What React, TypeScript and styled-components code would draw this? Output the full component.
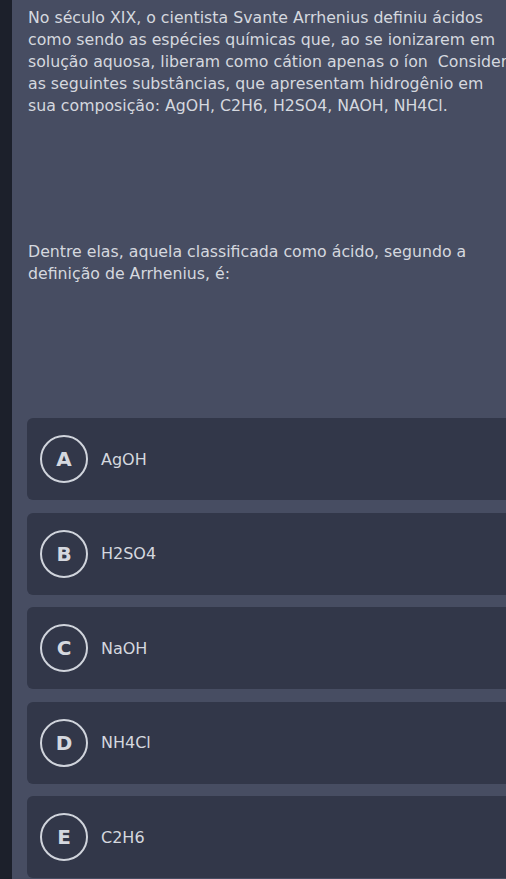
import styled, { createGlobalStyle } from 'styled-components';

const GlobalStyle = createGlobalStyle`
    html, body {
        margin: 0;
        padding: 0;
        background: #474d62;
        overflow: hidden;
    }
    #root {
        width: 506px;
        height: 879px;
        overflow: hidden;
    }
`;

const Page = styled.div`
    display: flex;
    width: 540px;
    height: 879px;
    font-family: "DejaVu Sans", "Open Sans", sans-serif;
    color: #d5d8df;
`;

const SideStrip = styled.div`
    width: 12px;
    flex-shrink: 0;
    background: #1c202b;
`;

const Main = styled.main`
    flex: 1;
    background: #474d62;
    padding: 7px 0 0 15px;
    display: flex;
    flex-direction: column;
`;

const Statement = styled.p<{ $gapAfter: number }>`
    margin: 0 0 ${p => p.$gapAfter}px 1px;
    font-size: 15.75px;
    line-height: 22px;
    white-space: nowrap;
`;

const Options = styled.div`
    display: flex;
    flex-direction: column;
    gap: 12.5px;
`;

const OptionCard = styled.div`
    height: 82px;
    background: #323749;
    border-radius: 6px 0 0 6px;
    display: flex;
    align-items: center;
    padding-left: 13px;
    gap: 13px;
`;

const Letter = styled.span`
    width: 44px;
    height: 44px;
    border: 2px solid #d0d4dc;
    border-radius: 50%;
    display: flex;
    align-items: center;
    justify-content: center;
    font-size: 20px;
    font-weight: 700;
    color: #d5d8df;
`;

const Answer = styled.span`
    font-size: 16px;
`;

const options = [
    { key: 'A', text: 'AgOH' },
    { key: 'B', text: 'H2SO4' },
    { key: 'C', text: 'NaOH' },
    { key: 'D', text: 'NH4Cl' },
    { key: 'E', text: 'C2H6' },
];

export default function App() {
    return (
        <>
            <GlobalStyle />
            <Page>
                <SideStrip />
                <Main>
                    <Statement $gapAfter={124}>
                        No século XIX, o cientista Svante Arrhenius definiu ácidos<br />
                        como sendo as espécies químicas que, ao se ionizarem em<br />
                        solução aquosa, liberam como cátion apenas o íon&nbsp; Considere<br />
                        as seguintes substâncias, que apresentam hidrogênio em<br />
                        sua composição: AgOH, C2H6, H2SO4, NAOH, NH4Cl.
                    </Statement>
                    <Statement $gapAfter={133}>
                        Dentre elas, aquela classificada como ácido, segundo a<br />
                        definição de Arrhenius, é:
                    </Statement>
                    <Options>
                        {options.map(o => (
                            <OptionCard key={o.key}>
                                <Letter>{o.key}</Letter>
                                <Answer>{o.text}</Answer>
                            </OptionCard>
                        ))}
                    </Options>
                </Main>
            </Page>
        </>
    );
}
